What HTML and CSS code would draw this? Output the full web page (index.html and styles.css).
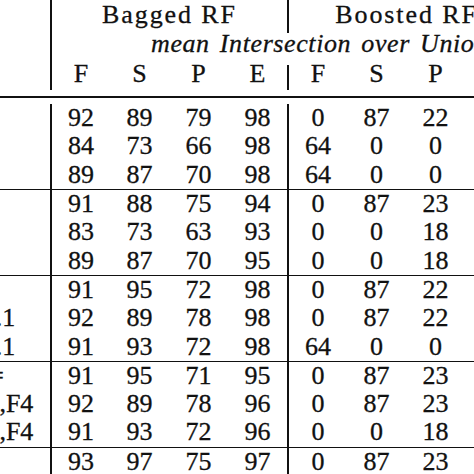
FILE: index.html
```html
<!DOCTYPE html>
<html>
<head>
<meta charset="utf-8">
<link rel="stylesheet" href="styles.css">
</head>
<body>
<div class="frame">
<table class="results">
  <colgroup>
    <col class="c-lbl"><col class="c-first"><col class="c-num"><col class="c-num"><col class="c-num">
    <col class="c-first"><col class="c-num"><col class="c-num"><col class="c-num">
  </colgroup>
  <thead>
    <tr class="h-group"><th class="lbl"></th><th colspan="4" class="vl group-name">Bagged RF</th><th colspan="4" class="vl group-name">Boosted RF</th></tr>
    <tr class="h-metric"><th class="lbl"></th><th colspan="8" class="vl metric">mean Intersection over Union</th></tr>
    <tr class="h-cols"><th class="lbl"></th><th class="vl">F</th><th>S</th><th>P</th><th>E</th><th class="vl">F</th><th>S</th><th>P</th><th>E</th></tr>
    <tr class="toprule"><td colspan="9"><div class="bar"></div></td></tr>
  </thead>
  <tbody>
    <tr><td class="lbl">F1</td><td>92</td><td>89</td><td>79</td><td>98</td><td>0</td><td>87</td><td>22</td><td>97</td></tr>
    <tr><td class="lbl">F2</td><td>84</td><td>73</td><td>66</td><td>98</td><td>64</td><td>0</td><td>0</td><td>97</td></tr>
    <tr><td class="lbl">F3</td><td>89</td><td>87</td><td>70</td><td>98</td><td>64</td><td>0</td><td>0</td><td>97</td></tr>
  </tbody>
  <tbody>
    <tr><td class="lbl">F1,F2</td><td>91</td><td>88</td><td>75</td><td>94</td><td>0</td><td>87</td><td>23</td><td>94</td></tr>
    <tr><td class="lbl">F1,F3</td><td>83</td><td>73</td><td>63</td><td>93</td><td>0</td><td>0</td><td>18</td><td>93</td></tr>
    <tr><td class="lbl">F2,F3</td><td>89</td><td>87</td><td>70</td><td>95</td><td>0</td><td>0</td><td>18</td><td>95</td></tr>
  </tbody>
  <tbody>
    <tr><td class="lbl">F1,F2,F3</td><td>91</td><td>95</td><td>72</td><td>98</td><td>0</td><td>87</td><td>22</td><td>97</td></tr>
    <tr><td class="lbl">Spatial,0.1</td><td>92</td><td>89</td><td>78</td><td>98</td><td>0</td><td>87</td><td>22</td><td>97</td></tr>
    <tr><td class="lbl">Spatial,0.1</td><td>91</td><td>93</td><td>72</td><td>98</td><td>64</td><td>0</td><td>0</td><td>97</td></tr>
  </tbody>
  <tbody>
    <tr><td class="lbl">Spectral=</td><td>91</td><td>95</td><td>71</td><td>95</td><td>0</td><td>87</td><td>23</td><td>95</td></tr>
    <tr><td class="lbl">F1,F2,F3,F4</td><td>92</td><td>89</td><td>78</td><td>96</td><td>0</td><td>87</td><td>23</td><td>96</td></tr>
    <tr><td class="lbl">F1,F2,F3,F4</td><td>91</td><td>93</td><td>72</td><td>96</td><td>0</td><td>0</td><td>18</td><td>96</td></tr>
  </tbody>
  <tbody>
    <tr><td class="lbl">All</td><td>93</td><td>97</td><td>75</td><td>97</td><td>0</td><td>87</td><td>23</td><td>97</td></tr>
  </tbody>
</table>
</div>
</body>
</html>
```
FILE: styles.css
```css
html, body {
  margin: 0;
  background: #fff;
}

.frame {
  width: 474px;
  height: 474px;
  overflow: hidden;
}

.results {
  border-collapse: separate;
  border-spacing: 0;
  table-layout: fixed;
  width: 619px;
  margin-left: -96px;
  font-family: "Liberation Serif", "Times New Roman", serif;
  font-size: 26px;
  color: #111;
  -webkit-text-stroke: 0.3px #111;
}

.results th,
.results td {
  padding: 0;
  font-weight: normal;
  text-align: center;
  white-space: nowrap;
}

.c-lbl { width: 146px; }
.c-first { width: 60px; }
.c-num { width: 59px; }

.results .vl {
  border-left: 2px solid #111;
}

.h-group th {
  line-height: 30px;
  padding-bottom: 3px;
}

.group-name {
  letter-spacing: 1.9px;
}

.h-metric th {
  line-height: 22px;
  padding-bottom: 10px;
}

.results .metric {
  font-style: italic;
  text-align: left;
  padding-left: 99px;
  letter-spacing: 0.6px;
  word-spacing: 3px;
}

.h-cols th {
  line-height: 18.4px;
  padding-bottom: 6.6px;
}

.results .toprule td {
  padding: 5.5px 0 6.7px;
}

.bar {
  height: 2px;
  background: #111;
}

.results tbody td {
  line-height: 28.3px;
}

.results tbody td:nth-child(2),
.results tbody td:nth-child(6) {
  border-left: 2px solid #111;
}

.results tbody + tbody tr:first-child td {
  border-top: 1px solid #111;
}

.results td.lbl {
  text-align: left;
}
```
